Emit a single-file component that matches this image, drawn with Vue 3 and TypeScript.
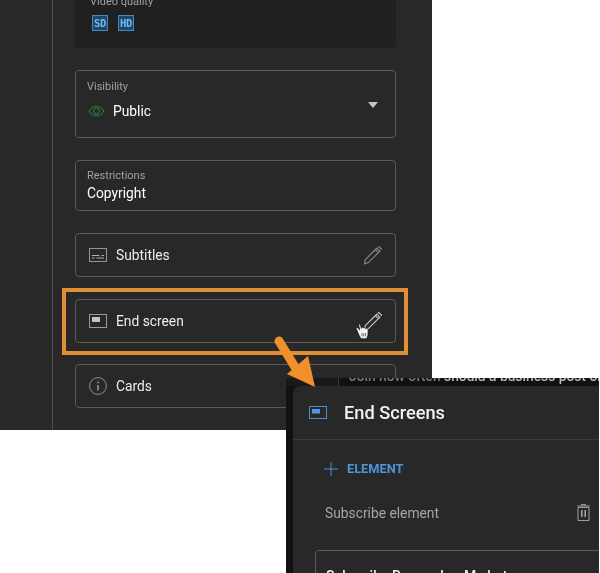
<script setup lang="ts">
const badges: string[] = ['SD', 'HD']
</script>

<template>
  <div class="page">
    <section class="sheet">
      <div class="rail"></div>
      <div class="col">
        <div class="quality">
          <div class="quality-label">Video quality</div>
          <div class="badges">
            <span v-for="b in badges" :key="b" class="badge">{{ b }}</span>
          </div>
        </div>

        <div class="card vis">
          <div>
            <div class="label">Visibility</div>
            <div class="vis-value">
              <svg class="eye" width="17" height="12" viewBox="0 0 16 12" fill="none" stroke="#338a3a" stroke-width="1">
                <path d="M.7 6C2.5 2.8 5 1.2 8 1.2S13.5 2.8 15.3 6C13.5 9.2 11 10.8 8 10.8S2.5 9.2.7 6Z" />
                <circle cx="8" cy="6" r="3" />
              </svg>
              <span class="value">Public</span>
            </div>
          </div>
          <span class="caret"></span>
        </div>

        <div class="card restr">
          <div class="label">Restrictions</div>
          <div class="value">Copyright</div>
        </div>

        <div class="card row">
          <svg class="row-icon" width="18" height="14" viewBox="0 0 18 14" fill="none" stroke="#959595">
            <rect x=".5" y=".5" width="17" height="13" />
            <path d="M3 7.5h7.5M12.5 7.5H15M3 10h2.5M7.5 10H15" stroke="#b0b0b0" />
          </svg>
          <span class="row-text">Subtitles</span>
          <svg class="pencil" width="18" height="19" viewBox="0 0 18 19" fill="none" stroke="#858585" stroke-width="1.2">
            <path d="M1.3 13.6 12.8 2.2l3 3L4.3 16.6l-3.8 1.3ZM11.4 3.6l3 3M14 1l.8-.5 2.7 2.7-.5.8" />
          </svg>
        </div>

        <div class="card row end">
          <svg class="row-icon" width="18" height="14" viewBox="0 0 18 14" fill="none" stroke="#9a9a9a">
            <rect x=".5" y=".5" width="17" height="13" />
            <rect x="3" y="3" width="8" height="5" fill="#c4c4c4" stroke="none" />
          </svg>
          <span class="row-text">End screen</span>
          <svg class="pencil" width="18" height="19" viewBox="0 0 18 19" fill="none" stroke="#c4c4c4" stroke-width="1.2">
            <path d="M1.3 13.6 12.8 2.2l3 3L4.3 16.6l-3.8 1.3ZM11.4 3.6l3 3M14 1l.8-.5 2.7 2.7-.5.8" />
          </svg>
          <svg class="hand" width="14" height="17" viewBox="0 0 13 15">
            <path d="M0 4.5 1.4 3.8 3.4 6.2 2.5.8 3.8.3 5 4.6 6 3.4 7.2 4.2 8.2 4l.9.8 1-.2 1.2 1.4-.3 5.2-1.2 3H4.6L3 11.2Z" fill="#f4f4f4" stroke="#111" stroke-width=".6" />
            <path d="M5.5 9v3M7.2 9v3M8.9 9v3" stroke="#555" stroke-width=".8" />
          </svg>
          <div class="highlight"></div>
        </div>

        <div class="card row cards">
          <svg class="row-icon" width="18" height="18" viewBox="0 0 18 18" fill="none" stroke="#8f8f8f">
            <circle cx="9" cy="9" r="8.4" />
            <path d="M9 8v5.5M9 4.6v1.6" stroke="#b5b5b5" stroke-width="1.2" />
          </svg>
          <span class="row-text">Cards</span>
        </div>
      </div>
    </section>

    <section class="overlay">
      <div class="strip">
        <div class="strip-side"></div>
        <div class="strip-text">Join how often <span class="strip-bright">should a business post on</span></div>
      </div>
      <div class="panel">
        <header class="head">
          <svg width="18" height="13" viewBox="0 0 18 13" fill="none" stroke="#4a90cf">
            <rect x=".5" y=".5" width="17" height="12" />
            <rect x="3" y="3" width="8" height="4.5" fill="#4a9ce0" stroke="none" />
          </svg>
          <h1 class="title">End Screens</h1>
        </header>
        <div class="body">
          <div class="add">
            <svg width="14" height="14" viewBox="0 0 14 14" stroke="#4a90cf" fill="none">
              <path d="M7 0v14M0 7h14" />
            </svg>
            <span class="add-text">ELEMENT</span>
          </div>
          <div class="element">
            <span class="element-text">Subscribe element</span>
            <svg width="13" height="17" viewBox="0 0 13 17" fill="none" stroke="#a0a0a0">
              <path d="M1 3.5h11v13H1ZM0 2h13M4.5 2V.5h4V2" />
              <path d="M4.8 6v7M8.2 6v7" stroke-width="1.6" />
            </svg>
          </div>
          <div class="box">Subscribe Remember Me bat</div>
        </div>
      </div>
    </section>

    <svg class="arrow" width="50" height="60" viewBox="0 0 50 60">
      <path d="M5 6 24 37" stroke="#f0902a" stroke-width="9" stroke-linecap="round" fill="none" />
      <path d="M34 21 41 52 13 39Z" fill="#f0902a" />
    </svg>
  </div>
</template>

<style scoped>
.page {
  position: relative;
  width: 600px;
  height: 573px;
  overflow: hidden;
  background: #fff;
  font-family: Roboto, "Liberation Sans", sans-serif;
  filter: blur(0.35px);
}
.sheet {
  display: flex;
  width: 432px;
  height: 430px;
  background: #282828;
}
.rail {
  width: 52px;
  border-right: 1px solid #4f4f4f;
}
.col {
  display: flex;
  flex-direction: column;
  gap: 22px;
  width: 321px;
  margin-left: 22px;
}
.quality {
  height: 48px;
  padding-left: 15px;
  background: #202020;
  border-radius: 0 0 4px 4px;
}
.quality-label {
  margin-top: -5px;
  font-size: 11px;
  line-height: 13px;
  color: #a2a2a2;
}
.badges {
  display: flex;
  gap: 10px;
  margin: 7px 0 0 2px;
}
.badge {
  display: flex;
  align-items: center;
  justify-content: center;
  width: 16px;
  height: 16px;
  box-sizing: border-box;
  background: #1d4668;
  border: 1px solid #4a88bb;
  color: #74baf0;
  font-family: "DejaVu Sans Mono", monospace;
  font-weight: 700;
  font-size: 10.5px;
  letter-spacing: -0.4px;
}
.card {
  box-sizing: border-box;
  border: 1px solid #5a5a5a;
  border-radius: 4px;
}
.label {
  font-size: 11px;
  line-height: 13px;
  color: #a0a0a0;
}
.value {
  font-size: 13.8px;
  font-weight: 400;
  line-height: 18px;
  color: #fff;
}
.vis {
  display: flex;
  justify-content: space-between;
  height: 68px;
  padding: 9px 17px 0 11px;
}
.vis-value {
  display: flex;
  align-items: center;
  gap: 8px;
  margin-top: 9px;
}
.eye {
  margin-left: 1px;
}
.caret {
  width: 0;
  height: 0;
  margin-top: 22px;
  border-left: 5.5px solid transparent;
  border-right: 5.5px solid transparent;
  border-top: 6px solid #c4c4c4;
}
.restr {
  height: 51px;
  padding: 8px 11px 0;
}
.restr .value {
  margin-top: 2px;
}
.row {
  position: relative;
  display: flex;
  align-items: center;
  height: 44px;
  padding: 0 13px;
}
.row-icon {
  flex: none;
}
.row-text {
  margin-left: 9px;
  font-size: 13.8px;
  font-weight: 400;
  color: #ededed;
}
.pencil {
  margin-left: auto;
}
.cards {
  margin-top: -1px;
}
.hand {
  position: absolute;
  left: 280px;
  top: 23px;
}
.highlight {
  position: absolute;
  left: -14px;
  right: -13px;
  top: -12px;
  bottom: -13px;
  border: 4.5px solid #e08f36;
  pointer-events: none;
}
.overlay {
  position: absolute;
  left: 286px;
  top: 378px;
  width: 313px;
  height: 195px;
  display: flex;
  flex-direction: column;
  background: #111;
  overflow: hidden;
}
.strip {
  display: flex;
  flex: none;
  height: 8px;
  overflow: hidden;
}
.strip-side {
  flex: none;
  width: 52px;
  background: #191919;
  border-right: 1px solid #3a3a3a;
}
.strip-text {
  flex: none;
  margin: -11px 0 0 10px;
  font-size: 13.8px;
  font-weight: 500;
  line-height: 18px;
  color: #7a7a7a;
  white-space: nowrap;
}
.strip-bright {
  color: #bcbcbc;
}
.panel {
  flex: 1;
  margin-left: 7px;
  background: #282828;
  border-top-left-radius: 7px;
}
.head {
  display: flex;
  align-items: center;
  gap: 17px;
  height: 53px;
  padding-left: 16px;
  border-bottom: 1px solid #3a3a3a;
}
.title {
  margin: 0;
  font-size: 18.2px;
  font-weight: 500;
  color: #f2f2f2;
}
.body {
  display: flex;
  flex-direction: column;
}
.add {
  display: flex;
  align-items: center;
  gap: 9px;
  margin: 21px 0 0 31px;
}
.add-text {
  font-size: 12.8px;
  font-weight: 700;
  color: #4a96d8;
}
.element {
  display: flex;
  align-items: center;
  justify-content: space-between;
  margin: 28px 9px 0 32px;
}
.element-text {
  font-size: 13.8px;
  color: #a6a6a6;
}
.box {
  box-sizing: border-box;
  width: 300px;
  height: 60px;
  margin: 29px 0 0 22px;
  padding: 16px 0 0 10px;
  border: 1px solid #5a5a5a;
  border-radius: 4px;
  font-size: 14px;
  font-weight: 500;
  line-height: 18px;
  color: #f2f2f2;
  white-space: nowrap;
}
.arrow {
  position: absolute;
  left: 274px;
  top: 335px;
}
</style>
